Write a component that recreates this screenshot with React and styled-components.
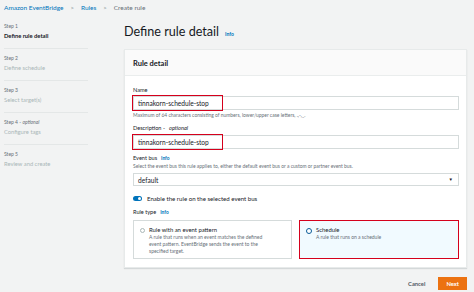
import React from 'react';
import styled, { createGlobalStyle } from 'styled-components';

const GlobalStyle = createGlobalStyle`
    body {
        margin: 0;
        background: #f2f3f3;
        font-family: Lato, "Liberation Sans", sans-serif;
        color: #16191f;
    }
`;

const Page = styled.div`
    width: 474px;
    height: 292px;
    overflow: hidden;
    background: #f2f3f3;
`;

const Breadcrumbs = styled.div`
    display: flex;
    align-items: center;
    gap: 7px;
    height: 14px;
    padding-left: 4px;
    font-size: 6.5px;
`;

const Crumb = styled.span`
    color: ${p => (p.$current ? '#687078' : '#0073bb')};
`;

const Chevron = styled.span`
    color: #879596;
    font-size: 6px;
`;

const Layout = styled.div`
    display: flex;
`;

const Sidebar = styled.nav`
    width: 84px;
    margin: 0 36px 0 4px;
    padding-top: 3px;
`;

const StepItem = styled.div`
    padding: 4px 0 ${p => (p.$last ? 0 : 7)}px;
    border-bottom: ${p => (p.$last ? 'none' : '1px solid #e4e7e7')};
`;

const StepLabel = styled.div`
    font-size: 5px;
    line-height: 10px;
    color: #687078;
`;

const StepTitle = styled.div`
    font-size: 5.8px;
    line-height: 10px;
    font-weight: ${p => (p.$active ? 700 : 400)};
    color: ${p => (p.$active ? '#16191f' : '#aab7b8')};
`;

const Main = styled.main`
    width: 343px;
`;

const Heading = styled.h1`
    display: flex;
    align-items: baseline;
    gap: 6px;
    margin: 9px 0 6px;
    font-size: 12.6px;
    line-height: 18px;
    font-weight: 400;
`;

const Info = styled.span`
    font-size: ${p => p.$size || 4.8}px;
    font-weight: 700;
    color: #0073bb;
`;

const Card = styled.section`
    background: #fff;
    border: 1px solid #e7eaea;
    box-shadow: 0 1px 1px rgba(0, 28, 36, 0.12);
`;

const CardHeader = styled.div`
    display: flex;
    align-items: center;
    height: 26px;
    padding: 2px 8px 0;
    box-sizing: border-box;
    background: #fafafa;
    border-bottom: 1px solid #eaeded;
    font-size: 7.5px;
    font-weight: 700;
`;

const CardBody = styled.div`
    padding: 10px 7px 8px 8px;
`;

const Label = styled.div`
    display: flex;
    align-items: baseline;
    gap: 4px;
    margin-top: ${p => p.$top || 0}px;
    font-size: 5.6px;
    line-height: 8px;
`;

const Hint = styled.div`
    margin-top: ${p => p.$top || 0}px;
    font-size: 4.95px;
    line-height: 8px;
    color: #687078;
`;

const InputWrap = styled.div`
    position: relative;
    margin-top: ${p => p.$top || 0}px;
`;

const TextBox = styled.div`
    display: flex;
    align-items: center;
    justify-content: space-between;
    height: ${p => p.$height || 14}px;
    padding: 0 5px 0 4px;
    box-sizing: border-box;
    border: 1px solid #d5dbdb;
    font-size: 6.6px;
`;

const Highlight = styled.div`
    position: absolute;
    left: -1px;
    top: -1px;
    width: 91px;
    height: 16px;
    box-sizing: border-box;
    border: 1.5px solid #d5001c;
`;

const Caret = styled.span`
    font-size: 4.5px;
    color: #16191f;
`;

const ToggleRow = styled.div`
    display: flex;
    align-items: center;
    gap: 5px;
    margin-top: 8px;
    height: 8px;
    font-size: 6.1px;
`;

const Toggle = styled.span`
    position: relative;
    width: 9px;
    height: 5px;
    border-radius: 3px;
    background: #0073bb;

    &::after {
        content: '';
        position: absolute;
        right: 1px;
        top: 1px;
        width: 3px;
        height: 3px;
        border-radius: 50%;
        background: #fff;
    }
`;

const Tiles = styled.div`
    display: grid;
    grid-template-columns: 159px 160px;
    justify-content: space-between;
    margin-top: 4px;
`;

const Tile = styled.div`
    display: flex;
    gap: 4px;
    height: 39px;
    padding: 5px 6px 0;
    box-sizing: border-box;
    background: ${p => (p.$selected ? '#f1faff' : '#fff')};
    border: ${p => (p.$selected ? '1.5px solid #d5001c' : '1px solid #d5dbdb')};
`;

const Radio = styled.span`
    flex: none;
    width: ${p => (p.$checked ? 6 : 5)}px;
    height: ${p => (p.$checked ? 6 : 5)}px;
    margin-top: 2px;
    border-radius: 50%;
    box-sizing: border-box;
    border: ${p => (p.$checked ? '1.9px solid #0a5c99' : '0.8px solid #aab7b8')};
    background: #fff;
`;

const TileTitle = styled.div`
    font-size: 5.9px;
    line-height: 8px;
`;

const TileText = styled.div`
    font-size: 5px;
    line-height: 7px;
    color: #687078;
`;

const Actions = styled.div`
    display: flex;
    justify-content: flex-end;
    align-items: center;
    gap: 13px;
    margin-top: 9px;
`;

const Button = styled.button`
    height: 13px;
    padding: 0 ${p => (p.$primary ? 8 : 0)}px;
    border: none;
    background: ${p => (p.$primary ? '#ec7211' : 'transparent')};
    color: ${p => (p.$primary ? '#fff' : '#545b64')};
    font-family: inherit;
    font-size: 5.8px;
    font-weight: 700;
`;

const steps = [
    { label: 'Step 1', title: 'Define rule detail', active: true },
    { label: 'Step 2', title: 'Define schedule' },
    { label: 'Step 3', title: 'Select target(s)' },
    { label: <>Step 4 - <i>optional</i></>, title: 'Configure tags' },
    { label: 'Step 5', title: 'Review and create' },
];

function App() {
    return (
        <>
            <GlobalStyle />
            <Page>
                <Breadcrumbs>
                    <Crumb>Amazon EventBridge</Crumb>
                    <Chevron>&gt;</Chevron>
                    <Crumb>Rules</Crumb>
                    <Chevron>&gt;</Chevron>
                    <Crumb $current>Create rule</Crumb>
                </Breadcrumbs>
                <Layout>
                    <Sidebar>
                        {steps.map((s, i) => (
                            <StepItem key={i} $last={i === steps.length - 1}>
                                <StepLabel>{s.label}</StepLabel>
                                <StepTitle $active={s.active}>{s.title}</StepTitle>
                            </StepItem>
                        ))}
                    </Sidebar>
                    <Main>
                        <Heading>
                            Define rule detail <Info $size={5}>Info</Info>
                        </Heading>
                        <Card>
                            <CardHeader>Rule detail</CardHeader>
                            <CardBody>
                                <Label>Name</Label>
                                <InputWrap $top={2}>
                                    <TextBox>tinnakorn-schedule-stop</TextBox>
                                    <Highlight />
                                </InputWrap>
                                <Hint $top={1}>
                                    Maximum of 64 characters consisting of numbers, lower/upper case letters, .,-,_.
                                </Hint>

                                <Label $top={5}>Description - <i>optional</i></Label>
                                <InputWrap $top={3}>
                                    <TextBox>tinnakorn-schedule-stop</TextBox>
                                    <Highlight />
                                </InputWrap>

                                <Label $top={5}>Event bus <Info>Info</Info></Label>
                                <Hint>
                                    Select the event bus this rule applies to, either the default event bus or a custom or partner event bus.
                                </Hint>
                                <InputWrap $top={3}>
                                    <TextBox $height={13}>
                                        default
                                        <Caret>▼</Caret>
                                    </TextBox>
                                </InputWrap>

                                <ToggleRow>
                                    <Toggle />
                                    Enable the rule on the selected event bus
                                </ToggleRow>

                                <Label $top={6}>Rule type <Info>Info</Info></Label>
                                <Tiles>
                                    <Tile>
                                        <Radio />
                                        <div>
                                            <TileTitle>Rule with an event pattern</TileTitle>
                                            <TileText>
                                                A rule that runs when an event matches the defined<br />
                                                event pattern. EventBridge sends the event to the<br />
                                                specified target.
                                            </TileText>
                                        </div>
                                    </Tile>
                                    <Tile $selected>
                                        <Radio $checked />
                                        <div>
                                            <TileTitle>Schedule</TileTitle>
                                            <TileText>A rule that runs on a schedule</TileText>
                                        </div>
                                    </Tile>
                                </Tiles>
                            </CardBody>
                        </Card>
                        <Actions>
                            <Button>Cancel</Button>
                            <Button $primary>Next</Button>
                        </Actions>
                    </Main>
                </Layout>
            </Page>
        </>
    );
}

export default App;
